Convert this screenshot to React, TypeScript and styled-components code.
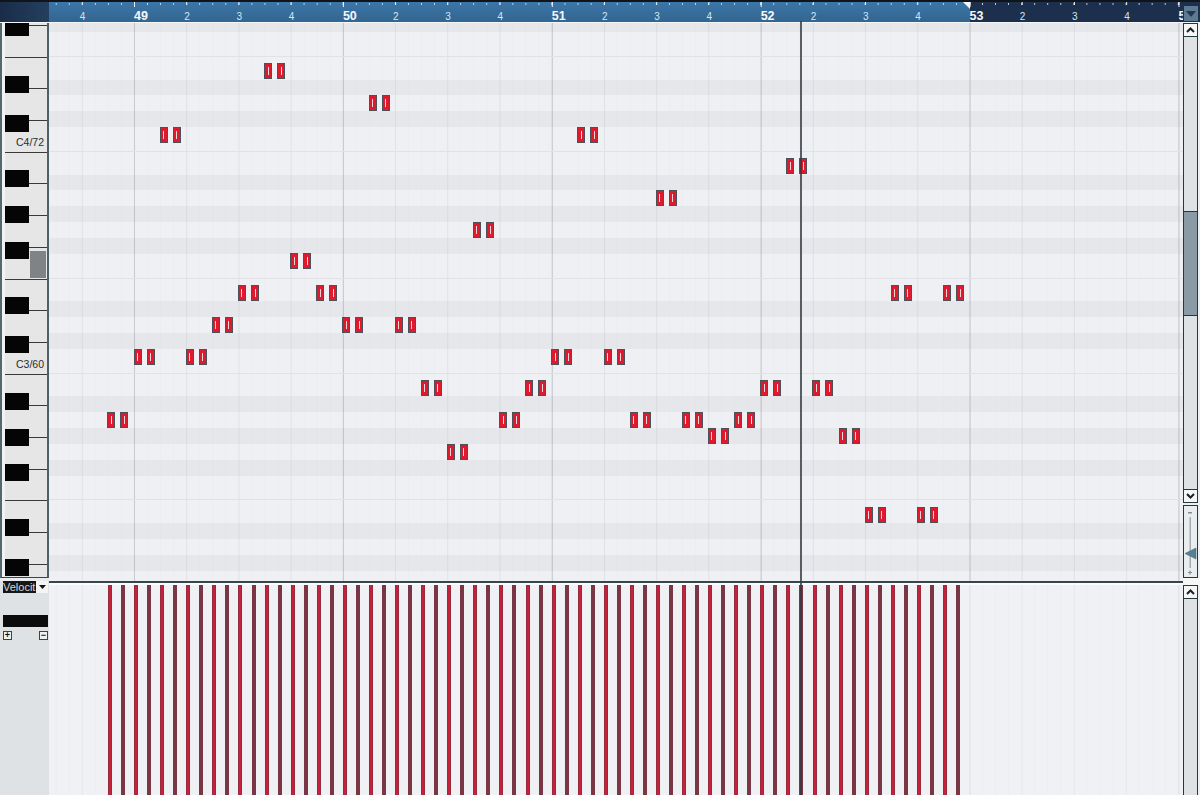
import React from 'react'
import styled, { createGlobalStyle } from 'styled-components'

const ROW = 15.85
const SIXTEENTH = 13.056
const BEAT = SIXTEENTH * 4
const BAR = BEAT * 4
const BAR_49 = 85 // offset of bar 49 from the left edge of the grid

const GlobalStyle = createGlobalStyle`
    html, body {
        margin: 0;
        background: #eef0f3;
    }
`;

const Page = styled.div`
    position: relative;
    width: 1200px;
    height: 795px;
    overflow: hidden;
    display: flex;
    flex-direction: column;
    font-family: "Liberation Sans", Arial, sans-serif;
    background: #e9ecee;
`;

const TopBar = styled.div`
    height: 23px;
    display: flex;
    flex: none;
    background: #f4f6f7;
`;

const Corner = styled.div`
    width: 49px;
    height: 22px;
    flex: none;
    border-top: 2px solid #10151c;
    box-sizing: border-box;
    background: linear-gradient(to right, #1a2c47, #24405f);
`;

const Ruler = styled.div`
    position: relative;
    width: 1134px;
    height: 22px;
    flex: none;
    box-sizing: border-box;
    padding-left: 30.8px;
    display: flex;
    overflow: hidden;
    border-top: 2px solid #10151c;
    background-image:
        linear-gradient(to right, #f2f6fa 1px, transparent 1px),
        linear-gradient(to right, #e6eef5 1px, transparent 1px),
        linear-gradient(to right, #c6d6e4 1px, transparent 1px),
        linear-gradient(to right, transparent 921px, #1c2f4c 921px),
        linear-gradient(#3b76a8, #33658f);
    background-size: ${BAR}px 5px, ${BEAT}px 3px, ${SIXTEENTH}px 2px, 100% 100%, 100% 100%;
    background-position: ${BAR_49}px 0, ${BAR_49}px 0, ${BAR_49}px 1px, 0 0, 0 0;
    background-repeat: repeat-x, repeat-x, repeat-x, no-repeat, no-repeat;
`;

const LoopEnd = styled.div`
    position: absolute;
    left: 914px;
    top: 0;
    width: 0;
    height: 0;
    border-top: 7px solid #f4f8fb;
    border-left: 7px solid transparent;
`;

const RulerCell = styled.div<{ $bar?: boolean }>`
    width: ${BEAT}px;
    flex: none;
    box-sizing: border-box;
    height: 20px;
    padding-top: ${p => (p.$bar ? 8 : 10)}px;
    padding-left: ${p => (p.$bar ? 2 : 0)}px;
    font-size: ${p => (p.$bar ? 12.5 : 10)}px;
    font-weight: ${p => (p.$bar ? 700 : 400)};
    line-height: ${p => (p.$bar ? 12 : 10)}px;
    color: ${p => (p.$bar ? '#f4f8fb' : '#d4e6f4')};
`;

const RulerEnd = styled.div`
    width: 17px;
    height: 22px;
    flex: none;
    box-sizing: border-box;
    padding: 4px 2px 0 1px;
    border-top: 2px solid #10151c;
    background: #1c2f4c;
`;

const MenuButton = styled.div`
    width: 14px;
    height: 15px;
    background: #5c7a92;
    display: flex;
    align-items: center;
    justify-content: center;
`;

const Body = styled.div`
    flex: 1;
    display: flex;
    min-height: 0;
`;

const LeftColumn = styled.div`
    width: 49px;
    flex: none;
    display: flex;
    flex-direction: column;
    gap: 3px;
`;

const Keyboard = styled.div`
    position: relative;
    height: 555px;
    flex: none;
    box-sizing: border-box;
    padding-left: 3px;
    border-left: 2px solid #55686d;
    border-right: 2px solid #4c6066;
    border-bottom: 1px solid #36474c;
    background: #f1f2f2;
    overflow: hidden;
`;

const KeyStack = styled.div`
    height: 100%;
    overflow: hidden;
    background: #e6e6e6;
`;

const FirstKey = styled.div`
    height: 2px;
    border-bottom: 1px solid #3a3a3a;
`;

const WhiteKey = styled.div`
    height: 31.7px;
    box-sizing: border-box;
    border-bottom: 1px solid #3a3a3a;
    display: flex;
    align-items: flex-end;
    justify-content: flex-end;
`;

const KeyLabel = styled.span`
    font-size: 10.5px;
    line-height: 12px;
    color: #2c2c2c;
    padding: 0 3px 4px 0;
`;

const HeldKey = styled.div`
    width: 16px;
    height: 27px;
    margin: 0 1px 1px 0;
    background: #808385;
`;

const BlackKey = styled.div`
    position: absolute;
    left: 3px;
    width: 24px;
    height: 17px;
    background: #050505;
`;

const LanePanel = styled.div`
    flex: 1;
    box-sizing: border-box;
    padding: 0 1px 0 3px;
    background: #dfe2e4;
`;

const VelocityRow = styled.div`
    display: flex;
    height: 12px;
`;

const VelocitySelect = styled.div`
    width: 33px;
    flex: none;
    overflow: hidden;
    white-space: nowrap;
    font-size: 11px;
    line-height: 12px;
    color: #d8d8d8;
    background: #161616;
`;

const SelectArrow = styled.div`
    flex: 1;
    background: #f4f4f4;
    display: flex;
    align-items: center;
    justify-content: center;
`;

const LaneMeter = styled.div`
    height: 12px;
    margin-top: 22px;
    background: #0b0b0b;
`;

const LaneButtons = styled.div`
    display: flex;
    justify-content: space-between;
    margin-top: 4px;
`;

const TinyButton = styled.div`
    width: 9px;
    height: 9px;
    box-sizing: border-box;
    border: 1px solid #3a4446;
    background: #eef0f0;
    font-size: 9px;
    font-weight: 700;
    line-height: 6px;
    text-align: center;
    color: #111;
`;

const CenterColumn = styled.div`
    width: 1134px;
    flex: none;
    display: flex;
    flex-direction: column;
`;

const stripes = (bar: string, beat: string, step: string) => `
    background-image:
        linear-gradient(to right, ${bar} 1px, transparent 1px),
        linear-gradient(to right, ${beat} 1px, transparent 1px),
        linear-gradient(to right, ${step} 1px, transparent 1px);
    background-size: ${BAR}px 100%, ${BEAT}px 100%, ${SIXTEENTH}px 100%;
    background-position: ${BAR_49}px 0, ${BAR_49}px 0, ${BAR_49}px 0;
`;

const GridPane = styled.div`
    position: relative;
    height: 558px;
    flex: none;
    overflow: hidden;
    background-color: #eef0f3;
    ${stripes('#c6c9cd', '#e0e2e5', '#ebedf0')}
`;

const PitchRow = styled.div<{ $shaded: boolean; $line: boolean; $height: number }>`
    position: relative;
    height: ${p => p.$height}px;
    background: ${p => (p.$shaded ? 'rgba(90, 95, 105, 0.055)' : 'transparent')};

    &::after {
        content: '';
        display: ${p => (p.$line ? 'block' : 'none')};
        position: absolute;
        left: 0;
        right: 0;
        top: 50%;
        height: 1px;
        background: #e0e2e5;
    }
`;

const Note = styled.div`
    position: absolute;
    width: 8px;
    height: 16px;
    box-sizing: border-box;
    border: 1px solid #4d5058;
    background: #de1a2e;

    &::after {
        content: '';
        position: absolute;
        left: 2.5px;
        top: 3px;
        width: 1px;
        height: 8px;
        background: #f3d4d6;
    }
`;

const Divider = styled.div`
    height: 4px;
    flex: none;
    box-sizing: border-box;
    border-top: 2px solid #35474c;
    background: #fbfcfc;
`;

const LanePane = styled.div`
    flex: 1;
    display: flex;
    box-sizing: border-box;
    padding-left: 59px;
    background-color: #eff1f4;
    ${stripes('#e3e5e8', '#e6e8eb', '#ebedf0')}
`;

const VelocityCell = styled.div`
    width: ${SIXTEENTH}px;
    flex: none;
`;

const VelocityBar = styled.div<{ $weak: boolean }>`
    width: 4px;
    height: 100%;
    background: ${p => (p.$weak
        ? '#7b3646'
        : 'linear-gradient(to right, #7d3040, #c6203a 35%, #c6203a 65%, #7d3040)')};
`;

const RightColumn = styled.div`
    width: 17px;
    flex: none;
    display: flex;
    flex-direction: column;
    background: #eef1f1;
`;

const ScrollBar = styled.div<{ $grow?: boolean }>`
    display: flex;
    flex-direction: column;
    width: 15px;
    box-sizing: border-box;
    border-left: 1px solid #23393c;
    border-right: 1px solid #23393c;
    background: #dfe2e5;
    ${p => (p.$grow ? 'flex: 1; min-height: 0;' : 'height: 480px; flex: none;')}
`;

const ScrollButton = styled.div`
    height: 14px;
    flex: none;
    box-sizing: border-box;
    border-top: 1px solid #23393c;
    border-bottom: 1px solid #23393c;
    background: #f5f7f7;
    display: flex;
    align-items: center;
    justify-content: center;
`;

const ScrollTrack = styled.div`
    flex: 1;
    min-height: 0;
`;

const ScrollThumb = styled.div`
    height: 105px;
    margin-top: 174px;
    box-sizing: border-box;
    border-top: 1px solid #23393c;
    border-bottom: 1px solid #23393c;
    background: #8b9ba6;
`;

const ZoomSlider = styled.div`
    width: 15px;
    height: 73px;
    margin-top: 2px;
    flex: none;
    box-sizing: border-box;
    border: 1px solid #23393c;
    background: #e9eded;
`;

const LaneGap = styled.div`
    height: 7px;
    flex: none;
    background: #f6f8f8;
`;

const Playhead = styled.div`
    position: absolute;
    left: 800px;
    top: 21px;
    bottom: 0;
    width: 2px;
    background: rgba(50, 58, 64, 0.8);
`;

export default function App() {
    const shadedPattern = [3, 5, 9, 11, 13]
    const linePattern = [1, 7]

    const isShaded = (row: number) => shadedPattern.includes(((row % 14) + 14) % 14)
    const hasLine = (row: number) => linePattern.includes(row % 14) || row === 15 || row === 21 || row === 29

    const rows = Array.from({ length: 36 }, (_, i) => i - 1)
    const beats = Array.from({ length: 22 }, (_, i) => i)

    const whiteLabels: Record<number, string> = { 3: 'C4/72', 10: 'C3/60' }
    const blackKeys = [-4, 53, 92, 147, 183, 219, 274, 313, 370, 406, 441, 496, 536]

    // pairs of sixteenths: [row, first sixteenth counted from bar 49]
    const notePairs: number[][] = [
        [2, 10], [4, 18], [6, 2], [6, 34], [8, 50], [10, 40], [12, 26], [14, 12],
        [16, 8], [16, 14], [16, 58], [16, 62], [18, 6], [18, 16], [18, 20],
        [20, 0], [20, 4], [20, 32], [20, 36],
        [22, 22], [22, 30], [22, 48], [22, 52],
        [24, -2], [24, 28], [24, 38], [24, 42], [24, 46],
        [25, 44], [25, 54], [26, 24], [30, 56], [30, 60],
    ]

    const velocities = Array.from({ length: 66 }, (_, i) => i)

    return (
        <Page>
            <GlobalStyle />
            <TopBar>
                <Corner />
                <Ruler>
                    <LoopEnd />
                    {beats.map(i => {
                        const pos = i + 3
                        const isBar = pos % 4 === 0
                        const label = isBar ? 48 + pos / 4 : (pos % 4) + 1
                        return <RulerCell key={i} $bar={isBar}>{label}</RulerCell>
                    })}
                </Ruler>
                <RulerEnd>
                    <MenuButton>
                        <svg width="10" height="6" viewBox="0 0 10 6">
                            <path d="M0 0 H10 L5 6 Z" fill="#22384f" />
                        </svg>
                    </MenuButton>
                </RulerEnd>
            </TopBar>
            <Body>
                <LeftColumn>
                    <Keyboard>
                        <KeyStack>
                            <FirstKey />
                            {Array.from({ length: 18 }, (_, i) => (
                                <WhiteKey key={i}>
                                    {whiteLabels[i] && <KeyLabel>{whiteLabels[i]}</KeyLabel>}
                                    {i === 7 && <HeldKey />}
                                </WhiteKey>
                            ))}
                        </KeyStack>
                        {blackKeys.map(top => (
                            <BlackKey key={top} style={{ top }} />
                        ))}
                    </Keyboard>
                    <LanePanel>
                        <VelocityRow>
                            <VelocitySelect>Velocit</VelocitySelect>
                            <SelectArrow>
                                <svg width="7" height="4" viewBox="0 0 7 4">
                                    <path d="M0 0 H7 L3.5 4 Z" fill="#111" />
                                </svg>
                            </SelectArrow>
                        </VelocityRow>
                        <LaneMeter />
                        <LaneButtons>
                            <TinyButton>+</TinyButton>
                            <TinyButton>−</TinyButton>
                        </LaneButtons>
                    </LanePanel>
                </LeftColumn>
                <CenterColumn>
                    <GridPane>
                        {rows.map(r => (
                            <PitchRow
                                key={r}
                                $shaded={isShaded(r)}
                                $line={hasLine(r)}
                                $height={r === -1 ? 9 : ROW}
                            />
                        ))}
                        {notePairs.flatMap(([row, step]) =>
                            [step, step + 1].map(s => (
                                <Note
                                    key={`${row}-${s}`}
                                    style={{ left: BAR_49 + s * SIXTEENTH - 0.5, top: 9 + row * ROW - 0.5 }}
                                />
                            ))
                        )}
                    </GridPane>
                    <Divider />
                    <LanePane>
                        {velocities.map(i => (
                            <VelocityCell key={i}>
                                <VelocityBar $weak={i % 2 === 1} />
                            </VelocityCell>
                        ))}
                    </LanePane>
                </CenterColumn>
                <RightColumn>
                    <ScrollBar>
                        <ScrollButton>
                            <svg width="9" height="6" viewBox="0 0 9 6">
                                <path d="M1 5 L4.5 1.5 L8 5" fill="none" stroke="#15232a" strokeWidth="2" />
                            </svg>
                        </ScrollButton>
                        <ScrollTrack>
                            <ScrollThumb />
                        </ScrollTrack>
                        <ScrollButton>
                            <svg width="9" height="6" viewBox="0 0 9 6">
                                <path d="M1 1 L4.5 4.5 L8 1" fill="none" stroke="#15232a" strokeWidth="2" />
                            </svg>
                        </ScrollButton>
                    </ScrollBar>
                    <ZoomSlider>
                        <svg width="13" height="71" viewBox="0 0 13 71">
                            <rect x="4" y="6" width="4" height="1.5" fill="#7d8f96" />
                            <rect x="5.5" y="11" width="1.5" height="51" fill="#a4adb4" />
                            <path d="M1 47.5 L12 42 V53 Z" fill="#56808f" stroke="#3d6473" strokeWidth="0.5" />
                            <path d="M4 66.5 H8 M6 64.5 V68.5" stroke="#7d8f96" strokeWidth="1.2" />
                        </svg>
                    </ZoomSlider>
                    <LaneGap />
                    <ScrollBar $grow>
                        <ScrollButton>
                            <svg width="9" height="6" viewBox="0 0 9 6">
                                <path d="M1 5 L4.5 1.5 L8 5" fill="none" stroke="#15232a" strokeWidth="2" />
                            </svg>
                        </ScrollButton>
                    </ScrollBar>
                </RightColumn>
            </Body>
            <Playhead />
        </Page>
    )
}
